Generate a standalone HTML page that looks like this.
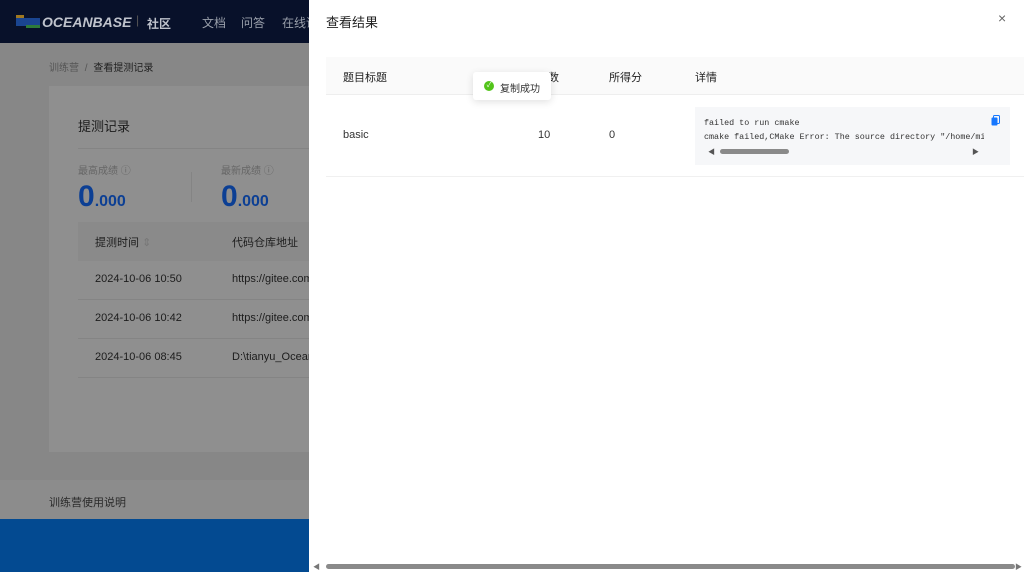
<!DOCTYPE html>
<html><head><meta charset="utf-8"><style>
*{margin:0;padding:0;box-sizing:border-box}
body{width:1024px;height:572px;overflow:hidden;position:relative;font-family:"Liberation Sans","Noto Sans CJK SC",sans-serif;background:#878787;}
.abs{position:absolute}
.hdr{left:0;top:0;width:1024px;height:43px;background:#08112a}
.card{left:49px;top:86px;width:300px;height:366px;background:#8f8f8f}
.t{position:absolute;white-space:nowrap}
.big{color:#0c3f94;font-weight:bold}
.drawer{left:309px;top:0;width:715px;height:572px;background:#fff}
.mono{font-family:"Liberation Mono","DejaVu Sans Mono",monospace;font-size:8.4px;color:#333}
</style></head><body>
<div class="abs hdr"></div>
<svg class="abs" style="left:16px;top:15px" width="24" height="14"><rect x="0" y="0" width="8" height="3" fill="#a07820"/><rect x="0" y="3" width="24" height="8" fill="#1a4590"/><rect x="10" y="10" width="14" height="3" fill="#2e7b3a"/></svg>
<div class="t" style="left:42px;top:14px;color:#bfc3cc;font-size:14px;font-weight:bold;font-style:italic">OCEANBASE</div>
<div class="t" style="left:136px;top:13px;color:#555;font-size:12px">|</div>
<div class="t" style="left:147px;top:15px;color:#bfc3cc;font-size:12px;font-weight:bold">社区</div>
<div class="t" style="left:202px;top:14px;color:#9aa0ab;font-size:12px">文档</div>
<div class="t" style="left:241px;top:14px;color:#9aa0ab;font-size:12px">问答</div>
<div class="t" style="left:282px;top:14px;color:#9aa0ab;font-size:12px">在线课</div>
<div class="t" style="left:49px;top:59px;font-size:10px;color:#555">训练营 <span style="margin:0 3px">/</span> <span style="color:#222">查看提测记录</span></div>
<div class="abs card"></div>
<div class="t" style="left:78px;top:116px;font-size:13px;color:#1c1c1c">提测记录</div>
<div class="abs" style="left:78px;top:148px;width:231px;height:1px;background:#848484"></div>
<div class="t" style="left:78px;top:162px;font-size:10px;color:#666">最高成绩 ⓘ</div>
<div class="t" style="left:221px;top:162px;font-size:10px;color:#666">最新成绩 ⓘ</div>
<div class="abs" style="left:191px;top:172px;width:1px;height:30px;background:#848484"></div>
<div class="t big" style="left:78px;top:180px;font-size:30px">0<span style="font-size:16px">.000</span></div>
<div class="t big" style="left:221px;top:180px;font-size:30px">0<span style="font-size:16px">.000</span></div>
<div class="abs" style="left:78px;top:222px;width:231px;height:39px;background:#8a8a8a"></div>
<div class="t" style="left:95px;top:234px;font-size:11px;color:#1c1c1c">提测时间 <span style="color:#777">⇕</span></div>
<div class="t" style="left:232px;top:234px;font-size:11px;color:#1c1c1c">代码仓库地址</div>
<div class="t" style="left:95px;top:273px;font-size:11px;color:#1c1c1c">2024-10-06 10:50</div>
<div class="t" style="left:232px;top:273px;font-size:11px;color:#1c1c1c">https://gitee.com</div>
<div class="abs" style="left:78px;top:299px;width:231px;height:1px;background:#848484"></div>
<div class="t" style="left:95px;top:312px;font-size:11px;color:#1c1c1c">2024-10-06 10:42</div>
<div class="t" style="left:232px;top:312px;font-size:11px;color:#1c1c1c">https://gitee.com</div>
<div class="abs" style="left:78px;top:338px;width:231px;height:1px;background:#848484"></div>
<div class="t" style="left:95px;top:351px;font-size:11px;color:#1c1c1c">2024-10-06 08:45</div>
<div class="t" style="left:232px;top:351px;font-size:11px;color:#1c1c1c">D:\tianyu_Ocean</div>
<div class="abs" style="left:78px;top:377px;width:231px;height:1px;background:#848484"></div>
<div class="abs" style="left:0;top:480px;width:309px;height:39px;background:#8c8c8c"></div>
<div class="t" style="left:49px;top:494px;font-size:11px;color:#2a2a2a">训练营使用说明</div>
<div class="abs" style="left:0;top:519px;width:309px;height:53px;background:#034a91"></div>

<div class="abs drawer"></div>
<div class="t" style="left:326px;top:12px;font-size:13px;color:#222">查看结果</div>
<div class="t" style="left:998px;top:10px;font-size:14px;color:#666">×</div>
<div class="abs" style="left:326px;top:57px;width:698px;height:38px;background:#fafafa;border-bottom:1px solid #eee"></div>
<div class="t" style="left:343px;top:69px;font-size:11px;color:#222">题目标题</div>
<div class="t" style="left:548px;top:69px;font-size:11px;color:#222">数</div>
<div class="t" style="left:609px;top:69px;font-size:11px;color:#222">所得分</div>
<div class="t" style="left:695px;top:69px;font-size:11px;color:#222">详情</div>
<div class="t" style="left:343px;top:129px;font-size:11px;color:#333">basic</div>
<div class="t" style="left:538px;top:129px;font-size:11px;color:#333">10</div>
<div class="t" style="left:609px;top:129px;font-size:11px;color:#333">0</div>
<div class="abs" style="left:695px;top:107px;width:315px;height:58px;background:#f6f7f9"></div>
<div class="abs" style="left:704px;top:116px;width:280px;height:30px;overflow:hidden">
<div class="t mono" style="left:0;top:2px">failed to run cmake</div>
<div class="t mono" style="left:0;top:16px">cmake failed,CMake Error: The source directory "/home/mi</div>
</div>
<div class="t" style="left:708px;top:147px;font-size:7px;color:#555">◀</div>
<div class="abs" style="left:720px;top:149px;width:69px;height:5px;border-radius:3px;background:#8a8a8a"></div>
<div class="t" style="left:972px;top:147px;font-size:7px;color:#555">▶</div>
<svg class="abs" style="left:991px;top:115px" width="9" height="11"><rect x="2.5" y="0.5" width="6" height="8" rx="1" fill="none" stroke="#1677ff"/><rect x="0.5" y="2.5" width="6" height="8" rx="1" fill="#1677ff"/></svg>
<div class="abs" style="left:326px;top:176px;width:698px;height:1px;background:#f0f0f0"></div>
<div class="abs" style="left:473px;top:72px;width:78px;height:28px;background:#fff;box-shadow:0 2px 8px rgba(0,0,0,.12);border-radius:3px"></div>
<div class="abs" style="left:484px;top:81px;width:10px;height:10px;border-radius:50%;background:#52c41a;color:#fff;font-size:7px;text-align:center;line-height:10px">✓</div>
<div class="t" style="left:500px;top:80px;font-size:10px;color:#333">复制成功</div>
<div class="t" style="left:313px;top:562px;font-size:7px;color:#777">◀</div>
<div class="abs" style="left:326px;top:564px;width:689px;height:5px;border-radius:3px;background:#8a8a8a"></div>
<div class="t" style="left:1015px;top:562px;font-size:7px;color:#777">▶</div>
</body></html>
